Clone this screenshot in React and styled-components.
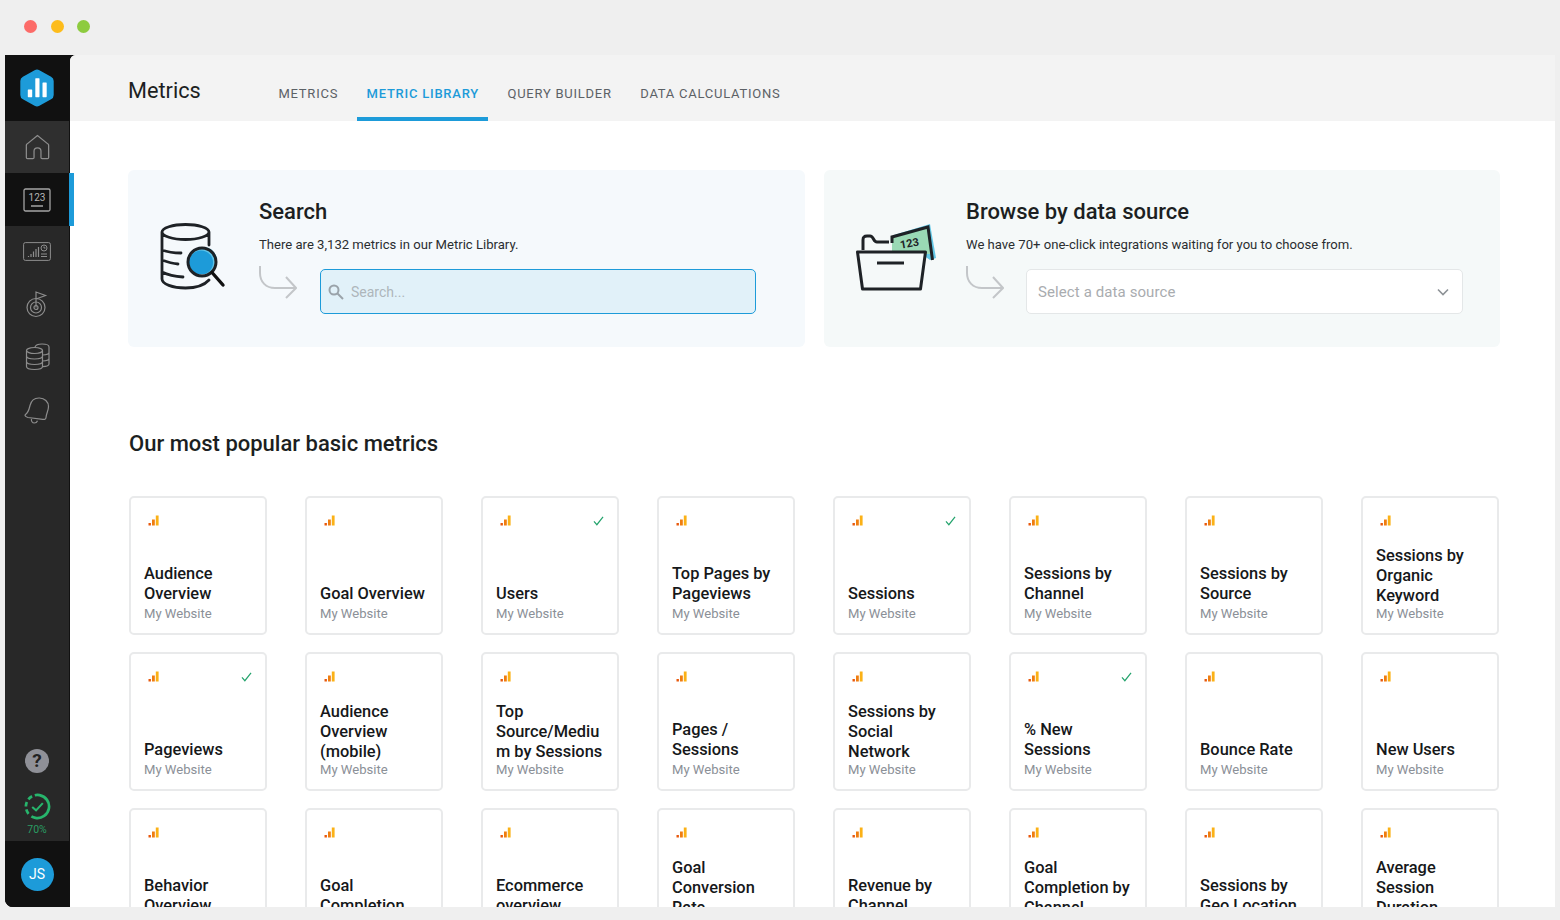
import React from "react";
import styled, { createGlobalStyle } from "styled-components";

const blue = "#1d9bd9";

const rowOne = [
  { title: "Audience Overview" },
  { title: "Goal Overview" },
  { title: "Users", added: true },
  { title: "Top Pages by Pageviews" },
  { title: "Sessions", added: true },
  { title: "Sessions by Channel" },
  { title: "Sessions by Source" },
  { title: "Sessions by Organic Keyword", long: true }
];

const rowTwo = [
  { title: "Pageviews", added: true },
  { title: "Audience Overview (mobile)", long: true },
  { title: "Top Source/Medium by Sessions", long: true },
  { title: "Pages / Sessions" },
  { title: "Sessions by Social Network", long: true },
  { title: "% New Sessions", added: true },
  { title: "Bounce Rate" },
  { title: "New Users" }
];

const rowThree = [
  { title: "Behavior Overview" },
  { title: "Goal Completion" },
  { title: "Ecommerce overview" },
  { title: "Goal Conversion Rate", long: true },
  { title: "Revenue by Channel" },
  { title: "Goal Completion by Channel", long: true },
  { title: "Sessions by Geo Location" },
  { title: "Average Session Duration", long: true }
];

const metrics = [...rowOne, ...rowTwo, ...rowThree];

const tabs = ["Metrics", "Metric Library", "Query Builder", "Data Calculations"];

const Logo = () => (
  <svg width="36" height="38" viewBox="0 0 36 38">
    <path
      d="M15.6 1.2a5 5 0 0 1 4.8 0l11.7 6.5a5 5 0 0 1 2.6 4.4v13.8a5 5 0 0 1-2.6 4.4l-11.7 6.5a5 5 0 0 1-4.8 0L3.9 30.3a5 5 0 0 1-2.6-4.4V12.1a5 5 0 0 1 2.6-4.4z"
      fill={blue}
    />
    <rect x="8.8" y="20.500" width="4.400" height="7.700" rx="0.6" fill="#fff" />
    <rect x="16.300" y="9.200" width="4.200" height="19" rx="0.6" fill="#fff" />
    <rect x="23.500" y="13.400" width="4.200" height="14.800" rx="0.6" fill="#fff" />
  </svg>
);

const HomeIcon = () => (
  <svg width="25" height="26" viewBox="0 0 26 27" fill="none" stroke="#8d8d8d" strokeWidth="1.3">
    <path d="M13 1.5 2 10.5a1.5 1.5 0 0 0-.6 1.2v12.6c0 .7.5 1.2 1.2 1.2h5.6c.7 0 1.2-.5 1.2-1.2v-6.6c0-2 1.6-3.4 3.6-3.4s3.6 1.4 3.6 3.4v6.6c0 .7.5 1.2 1.2 1.2h5.600c.7 0 1.200-.5 1.200-1.200V11.700c0-.5-.2-.9-.6-1.200z" />
  </svg>
);

const NumberIcon = () => (
  <svg width="28" height="24" viewBox="0 0 28 24" fill="none">
    <rect x="1" y="1" width="26" height="22" rx="1.5" stroke="#a5a5a5" strokeWidth="1.3" />
    <text x="14" y="13" textAnchor="middle" fontFamily="Roboto, sans-serif" fontSize="10" fill="#b5b5b5">123</text>
    <path d="M8 18h12" stroke="#a5a5a5" strokeWidth="1.3" />
  </svg>
);

const DashboardIcon = () => (
  <svg width="28" height="19" viewBox="0 0 28 19" fill="none" stroke="#8d8d8d" strokeWidth="1">
    <rect x="0.6" y="0.6" width="26.8" height="17.8" rx="1.8" />
    <path d="M5.5 15v-1M8 15v-3M10.5 15V9.500M13 15V7M15.500 15V5" strokeWidth="1.2" />
    <circle cx="21" cy="6" r="3" />
    <path d="M21 4.500V6h1.500M18 12h6M18 14.500h6" />
  </svg>
);

const GoalIcon = () => (
  <svg width="22" height="27" viewBox="0 0 22 27" fill="none" stroke="#8d8d8d" strokeWidth="1.2">
    <circle cx="10" cy="16.500" r="9" />
    <circle cx="10" cy="16.500" r="5.500" />
    <circle cx="10" cy="16.500" r="2" />
    <path d="M10 16.500V1l9.500 3.500L10 8" />
  </svg>
);

const DatabaseIcon = () => (
  <svg width="25" height="28" viewBox="0 0 25 28" fill="none" stroke="#8d8d8d" strokeWidth="1.2">
    <ellipse cx="9.500" cy="7.500" rx="8" ry="3" />
    <path d="M1.500 7.500v16c0 1.700 3.600 3 8 3s8-1.300 8-3v-16M1.500 13c0 1.700 3.600 3 8 3s8-1.300 8-3M1.500 18.500c0 1.700 3.600 3 8 3s8-1.300 8-3" />
    <path d="M10 4c.5-1.700 3.300-3 7-3 4.100 0 7 1.300 7 3v17c0 1.300-2.400 2.500-6.500 2.700M24 9.500c0 1.200-2.500 2.300-6.500 2.500M24 15.500c0 1.200-2.500 2.300-6.500 2.500" />
  </svg>
);

const BellIcon = () => (
  <svg width="26" height="28" viewBox="0 0 26 28" fill="none" stroke="#8d8d8d" strokeWidth="1.2">
    <path d="M1.500 18.500c3-2 3.500-5 4.500-9C7.200 4.500 11 1.800 15.500 2c5 .2 9 3.500 9 8.500 0 4.500-2.300 7-2.500 11-.1 1.500-1.500 2.300-3.200 1.800L4 21.500c-2.300-.6-3.700-1.900-2.500-3z" />
    <path d="M7.500 23c-.5 2 .8 4 2.800 4 1.600 0 2.700-.9 3.200-2.300" />
  </svg>
);

const ProgressIcon = () => (
  <svg width="27" height="27" viewBox="0 0 28 28" fill="none">
    <circle cx="14" cy="14" r="12" stroke="#27b56c" strokeWidth="2.800" strokeDasharray="42 4 5 3 5 3 5 3 5 4.400" transform="rotate(-80 14 14)" />
    <path d="M8.500 14.500l4 3.500 7-7.500" stroke="#27b56c" strokeWidth="2.200" />
  </svg>
);

const navIcons = [
  { key: "home", icon: <HomeIcon />, hovered: true },
  { key: "numbers", icon: <NumberIcon />, active: true },
  { key: "dashboards", icon: <DashboardIcon /> },
  { key: "goals", icon: <GoalIcon /> },
  { key: "data", icon: <DatabaseIcon /> },
  { key: "alerts", icon: <BellIcon /> }
];

const SearchArt = () => (
  <svg width="68" height="68" viewBox="0 0 68 68" fill="none">
    <circle cx="43.500" cy="37.500" r="13.500" fill="#5fc4e8" />
    <circle cx="41" cy="39.500" r="12" fill={blue} />
    <path
      d="M2 9c0-4 10.500-7.500 23.500-7.500S49 5 49 9s-10.500 7.500-23.500 7.500S2 13 2 9zM2 9v47c0 5 10.500 9 23.500 9 10.500 0 18.500-2.500 23.500-8M49 9v13M2 27c4 1.500 12 3 19 3M2 37c4 1.500 10 3.500 16 4M2 49c4 2 13 4.500 21 5"
      stroke="#1e2226"
      strokeWidth="2.800"
      strokeLinecap="round"
    />
    <circle cx="42" cy="39" r="14" stroke="#1e2226" strokeWidth="3" />
    <path d="M52 49.500 63 62" stroke="#111" strokeWidth="3.400" strokeLinecap="round" />
  </svg>
);

const FolderArt = () => (
  <svg width="81" height="68" viewBox="0 0 81 68" fill="none">
    <path d="M38 12 74 1l6 34-6 2z" fill="#63c7e6" />
    <path d="M36 15 71 5l4 26H36z" fill="#9ad9b5" />
    <path d="M36 20v-6L72 4l4.500 33" stroke="#1e2226" strokeWidth="3" />
    <text x="44" y="24" fontFamily="Roboto, sans-serif" fontWeight="700" fontSize="11" fill="#1e2226" transform="rotate(-10 54 20)">123</text>
    <path d="M7 27V17c0-3 1-4 4-4h3c4 0 3 6 7 6h12" stroke="#1e2226" strokeWidth="3" />
    <path d="M1.500 29h68l-5 37H6.500z" fill="#f5f9f9" stroke="#1e2226" strokeWidth="3" strokeLinejoin="round" />
    <path d="M21 40h27" stroke="#1e2226" strokeWidth="3" />
  </svg>
);

const BendArrow = () => (
  <svg width="38" height="34" viewBox="0 0 38 34" fill="none" stroke="#c3c6c9" strokeWidth="2">
    <path d="M1 1v7c0 9 6 15 15 15h20M27 12l10 11-10 10" />
  </svg>
);

const AnalyticsMark = () => (
  <svg width="11" height="11" viewBox="0 0 11 11">
    <rect x="0.500" y="8" width="2.400" height="2.500" fill="#e8590c" />
    <rect x="4" y="4.500" width="2.800" height="6" fill="#ef7d10" />
    <rect x="7.800" y="0.500" width="2.800" height="10" fill="#fbb116" />
  </svg>
);

const CheckMark = () => (
  <svg width="11" height="10" viewBox="0 0 12 11" fill="none" stroke="#23a36c" strokeWidth="1.300">
    <path d="M1 6l3.200 3.600L11 1" />
  </svg>
);

const MetricCard = ({ title, added, long }) => (
  <Card>
    <CardTop>
      <AnalyticsMark />
      {added && <CheckMark />}
    </CardTop>
    <CardTitle long={long}>{title}</CardTitle>
    <CardSource>My Website</CardSource>
  </Card>
);

export default function App() {
  return (
    <>
      <GlobalStyle />
      <TitleBar>
        <Dot color="#fc6b68" />
        <Dot color="#fdbc1b" />
        <Dot color="#8dcb3f" />
      </TitleBar>
      <Window>
        <Sidebar>
          <LogoBlock>
            <Logo />
          </LogoBlock>
          {navIcons.map(item => (
            <NavItem key={item.key} hovered={item.hovered} active={item.active}>
              {item.icon}
              {item.active && <ActiveMark />}
            </NavItem>
          ))}
          <SideBottom>
            <HelpBadge>?</HelpBadge>
            <ProgressBlock>
              <ProgressIcon />
              <ProgressText>70%</ProgressText>
            </ProgressBlock>
            <UserBlock>
              <Avatar>JS</Avatar>
            </UserBlock>
          </SideBottom>
        </Sidebar>
        <Main>
          <Header>
            <PageTitle>Metrics</PageTitle>
            <Tabs>
              {tabs.map(tab => (
                <Tab key={tab} selected={tab === "Metric Library"}>
                  {tab}
                </Tab>
              ))}
            </Tabs>
          </Header>
          <Content>
            <Panels>
              <Panel tint="#f5f9fc">
                <PanelArt width="131px">
                  <SearchArt />
                </PanelArt>
                <PanelBody>
                  <PanelTitle>Search</PanelTitle>
                  <PanelText>There are 3,132 metrics in our Metric Library.</PanelText>
                  <PanelRow>
                    <BendArrow />
                    <SearchField>
                      <svg width="16" height="16" viewBox="0 0 16 16" fill="none" stroke="#9aa3aa" strokeWidth="2">
                        <circle cx="6" cy="6" r="4.500" />
                        <path d="M9.500 9.500 15 15" />
                      </svg>
                      <span>Search...</span>
                    </SearchField>
                  </PanelRow>
                </PanelBody>
              </Panel>
              <Panel tint="#f5f9f9">
                <PanelArt width="142px">
                  <FolderArt />
                </PanelArt>
                <PanelBody>
                  <PanelTitle>Browse by data source</PanelTitle>
                  <PanelText>We have 70+ one-click integrations waiting for you to choose from.</PanelText>
                  <PanelRow>
                    <BendArrow />
                    <SelectField>
                      <span>Select a data source</span>
                      <svg width="12" height="8" viewBox="0 0 12 8" fill="none" stroke="#8d9296" strokeWidth="1.600">
                        <path d="M1 1.500l5 5 5-5" />
                      </svg>
                    </SelectField>
                  </PanelRow>
                </PanelBody>
              </Panel>
            </Panels>
            <SectionTitle>Our most popular basic metrics</SectionTitle>
            <CardGrid>
              {metrics.map(metric => (
                <MetricCard key={metric.title} title={metric.title} added={metric.added} long={metric.long} />
              ))}
            </CardGrid>
          </Content>
        </Main>
      </Window>
    </>
  );
}

const GlobalStyle = createGlobalStyle`
  html, body {
    margin: 0;
    height: 100%;
    background: #efefef;
    overflow: hidden;
  }
  body {
    font-family: Roboto, "Liberation Sans", sans-serif;
    color: #1c1f22;
  }
  * {
    box-sizing: border-box;
  }
`;

const TitleBar = styled.div`
  height: 55px;
  display: flex;
  align-items: flex-start;
  gap: 13.500px;
  padding: 20px 0 0 24px;
`;

const Dot = styled.span`
  width: 13px;
  height: 13px;
  border-radius: 50%;
  background: ${props => props.color};
`;

const Window = styled.div`
  height: 852px;
  margin: 0 5px;
  display: flex;
  overflow: hidden;
  background: #111;
  border-radius: 0 0 0 8px;
`;

const Sidebar = styled.nav`
  width: 65px;
  flex: none;
  display: flex;
  flex-direction: column;
  background: #282828;
  border-right: 1px solid #111;
`;

const LogoBlock = styled.div`
  height: 66px;
  display: flex;
  align-items: center;
  justify-content: center;
  background: #111;
`;

const NavItem = styled.div`
  position: relative;
  height: ${props => (props.hovered ? "52px" : "53px")};
  flex: none;
  display: flex;
  align-items: center;
  justify-content: center;
  padding-bottom: ${props => (props.hovered || props.active ? "0" : "3px")};
  background: ${props => (props.active ? "#111" : props.hovered ? "#2f2f2f" : "transparent")};
`;

const ActiveMark = styled.span`
  position: absolute;
  top: 0;
  left: 64px;
  width: 5px;
  height: 53px;
  background: ${blue};
  z-index: 2;
`;

const SideBottom = styled.div`
  margin-top: auto;
  display: flex;
  flex-direction: column;
  align-items: center;
`;

const HelpBadge = styled.div`
  width: 24px;
  height: 24px;
  border-radius: 50%;
  background: #8f9097;
  color: #222;
  font-size: 19px;
  font-weight: 700;
  line-height: 24px;
  text-align: center;
`;

const ProgressBlock = styled.div`
  margin-top: 20px;
  height: 48px;
  display: flex;
  flex-direction: column;
  align-items: center;
`;

const ProgressText = styled.div`
  margin-top: 4px;
  font-size: 10.500px;
  line-height: 12px;
  color: #2a9d63;
`;

const UserBlock = styled.div`
  width: 100%;
  height: 66px;
  display: flex;
  align-items: center;
  justify-content: center;
  background: #111;
`;

const Avatar = styled.div`
  width: 33px;
  height: 33px;
  border-radius: 50%;
  background: ${blue};
  color: #fff;
  font-size: 14px;
  line-height: 33px;
  text-align: center;
`;

const Main = styled.main`
  flex: 1;
  min-width: 0;
  display: flex;
  flex-direction: column;
  background: #fff;
  border-radius: 6px 0 0 0;
  overflow: hidden;
`;

const Header = styled.header`
  height: 66px;
  flex: none;
  display: flex;
  padding-left: 58px;
  background: #f3f3f3;
`;

const PageTitle = styled.h1`
  width: 141px;
  margin: 0;
  font-size: 21.700px;
  font-weight: 400;
  line-height: 71px;
  color: #1c1f22;
`;

const Tabs = styled.div`
  display: flex;
  gap: 9.500px;
`;

const Tab = styled.div`
  padding: 25px 9.500px 0;
  font-size: 13px;
  line-height: 28px;
  letter-spacing: 0.750px;
  text-transform: uppercase;
  font-weight: ${props => (props.selected ? 500 : 400)};
  color: ${props => (props.selected ? blue : "#5c6166")};
  border-bottom: 4px solid ${props => (props.selected ? blue : "transparent")};
`;

const Content = styled.div`
  flex: 1;
  min-height: 0;
  padding: 49px 55px 0 58px;
  overflow: hidden;
`;

const Panels = styled.div`
  display: grid;
  grid-template-columns: 677px 676px;
  gap: 19px;
`;

const Panel = styled.section`
  height: 177px;
  display: flex;
  border-radius: 6px;
  background: ${props => props.tint};
`;

const PanelArt = styled.div`
  width: ${props => props.width};
  flex: none;
  padding: 53px 0 0 32px;
`;

const PanelBody = styled.div`
  width: 497px;
  padding-top: 28px;
`;

const PanelTitle = styled.h2`
  margin: 0;
  font-size: 22px;
  font-weight: 500;
  line-height: 28px;
  color: #1c1f22;
`;

const PanelText = styled.p`
  margin: 10px 0 0;
  font-size: 13.100px;
  line-height: 18px;
  color: #2a2d30;
`;

const PanelRow = styled.div`
  display: grid;
  grid-template-columns: 38px 1fr;
  column-gap: 23px;
  align-items: start;
  margin-top: 15px;

  > svg {
    margin-top: -4px;
  }
`;

const SearchField = styled.div`
  height: 45px;
  display: flex;
  align-items: center;
  gap: 7px;
  padding-left: 7px;
  border: 1.500px solid ${blue};
  border-radius: 5px;
  background: #e1f1f9;
  font-size: 14px;
  color: #aeb6bb;
`;

const SelectField = styled.div`
  height: 45px;
  margin-left: -1px;
  display: flex;
  align-items: center;
  justify-content: space-between;
  padding: 0 13px 0 11px;
  border: 1.500px solid #e4e7e8;
  border-radius: 5px;
  background: #fff;
  font-size: 15px;
  letter-spacing: 0.100px;
  color: #a9acaf;
`;

const SectionTitle = styled.h2`
  margin: 82px 0 0 1px;
  font-size: 22px;
  font-weight: 500;
  line-height: 30px;
  color: #1c1f22;
`;

const CardGrid = styled.div`
  display: grid;
  grid-template-columns: repeat(8, 138px);
  grid-auto-rows: 139px;
  column-gap: 38px;
  row-gap: 17px;
  margin: 37px 0 0 1px;
`;

const Card = styled.article`
  display: flex;
  flex-direction: column;
  padding: 17px 13px 10px 13px;
  border: 2px solid #e9eaeb;
  border-radius: 5px;
  background: #fff;
`;

const CardTop = styled.div`
  display: flex;
  align-items: center;
  justify-content: space-between;
  padding-left: 4px;
  margin-bottom: auto;
`;

const CardTitle = styled.div`
  font-size: 16.400px;
  font-weight: 500;
  line-height: 20px;
  margin-bottom: ${props => (props.long ? "-2px" : "0")};
  color: #16181a;
  overflow-wrap: anywhere;
`;

const CardSource = styled.div`
  margin-top: 1px;
  font-size: 13.100px;
  line-height: 18px;
  color: #8b9097;
`;
